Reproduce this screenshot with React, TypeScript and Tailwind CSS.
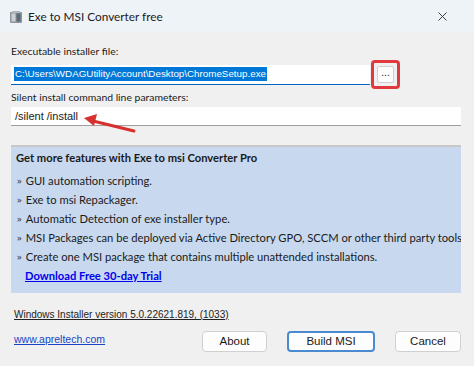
import { X } from 'lucide-react';

const bullets = [
  'GUI automation scripting.',
  'Exe to msi Repackager.',
  'Automatic Detection of exe installer type.',
  'MSI Packages can be deployed via Active Directory GPO, SCCM or other third party tools.',
  'Create one MSI package that contains multiple unattended installations.',
];

function AppIcon() {
  return (
    <svg width="14" height="14" viewBox="0 0 14 14">
      <rect x="1" y="2" width="12" height="11" rx="1" fill="#8c949c" />
      <rect x="2.5" y="3.5" width="4" height="8" fill="#c9d0d6" />
      <rect x="7.5" y="3.5" width="4" height="8" fill="#5f6a74" />
      <rect x="3" y="1" width="8" height="2" fill="#b0b8bf" />
    </svg>
  );
}

export default function App() {
  return (
    <div className="relative w-[474px] h-[366px] overflow-hidden bg-[#f0f0f0] text-[#1a1a1a] font-['Lato',sans-serif]">
      {/* title bar */}
      <div className="flex items-center h-[33px] pl-[9px] pr-[24px] bg-[#eef3f8]">
        <AppIcon />
        <span className="ml-[5px] text-[11.8px] text-[#1b1b1b]">Exe to MSI Converter free</span>
        <X className="ml-auto text-[#333]" size={15} strokeWidth={1.5} />
      </div>

      <div className="pl-[11px] pr-[13px]">
        <div className="mt-[11px] text-[10.4px] leading-[15px]">Executable installer file:</div>

        <div className="flex items-center mt-[1px]">
          <div className="flex items-center w-[359px] h-[20px] bg-white border-b border-[#0067c0] px-[3px]">
            <span className="bg-[#0078d7] text-white text-[9.8px] leading-[14px] font-['Liberation_Sans',sans-serif] px-[1px]">
              C:\Users\WDAGUtilityAccount\Desktop\ChromeSetup.exe
            </span>
          </div>
          <div className="ml-[1px] p-[3px] border-[3px] border-[#e0393e] rounded-[4px]">
            <div className="flex items-center justify-center w-[17px] h-[17px] bg-[#fdfdfd] border border-[#d0d0d0] rounded-[2px] text-[10px] leading-none font-['Liberation_Sans',sans-serif] pb-[3px]">
              ...
            </div>
          </div>
        </div>

        <div className="mt-[1px] text-[10.4px] leading-[15px]">Silent install command line parameters:</div>
        <div className="flex items-center h-[19px] mt-[2px] bg-white border-b border-[#a0a0a0] px-[4px] text-[11px] font-['Liberation_Sans',sans-serif]">
          /silent /install
        </div>

        <div className="mt-[19px] h-[148px] overflow-hidden bg-[#c8d9ef] border-t-2 border-[#c8c8c8] pl-[5px] whitespace-nowrap text-[11.2px]">
          <div className="mt-[2px] font-bold leading-[18px]">Get more features with Exe to msi Converter Pro</div>
          <div className="mt-[5px] pl-[1px]">
            {bullets.map((b) => (
              <div key={b} className="flex items-center h-[19px]">
                <span className="mr-[4px] text-[9.5px] text-[#333] font-['Open_Sans',sans-serif]">»</span>
                <span>{b}</span>
              </div>
            ))}
          </div>
          <div className="-mt-[1px] pl-[9px] leading-[19px] font-bold text-[#0000ee] underline">Download Free 30-day Trial</div>
        </div>

        <div className="mt-[14px] pl-[3px] text-[10px] leading-[15px] underline font-['Liberation_Sans',sans-serif] text-[#222]">
          Windows Installer version 5.0.22621.819, (1033)
        </div>

        <div className="flex items-start mt-[3px]">
          <span className="mt-[7px] pl-[3px] text-[10.5px] leading-[15px] underline text-[#1a44c8] font-['Liberation_Sans',sans-serif]">
            www.apreltech.com
          </span>
          <div className="ml-auto mt-[6px] flex gap-[20px] text-[11.5px] font-['Liberation_Sans',sans-serif]">
            <button className="w-[65px] h-[21px] bg-[#fdfdfd] border border-[#d0d0d0] rounded-[4px]">About</button>
            <button className="w-[88px] h-[21px] bg-[#fdfdfd] border-2 border-[#4a8ad0] rounded-[4px]">Build MSI</button>
            <button className="w-[66px] h-[21px] bg-[#fdfdfd] border border-[#d0d0d0] rounded-[4px]">Cancel</button>
          </div>
        </div>
      </div>

      {/* annotation arrow */}
      <svg className="absolute left-0 top-0 pointer-events-none" width="474" height="366">
        <line x1="134" y1="131" x2="93" y2="121" stroke="#d8302e" strokeWidth="3" strokeLinecap="round" />
        <polygon points="84,118 97,114 94,126" fill="#d8302e" />
      </svg>
    </div>
  );
}
